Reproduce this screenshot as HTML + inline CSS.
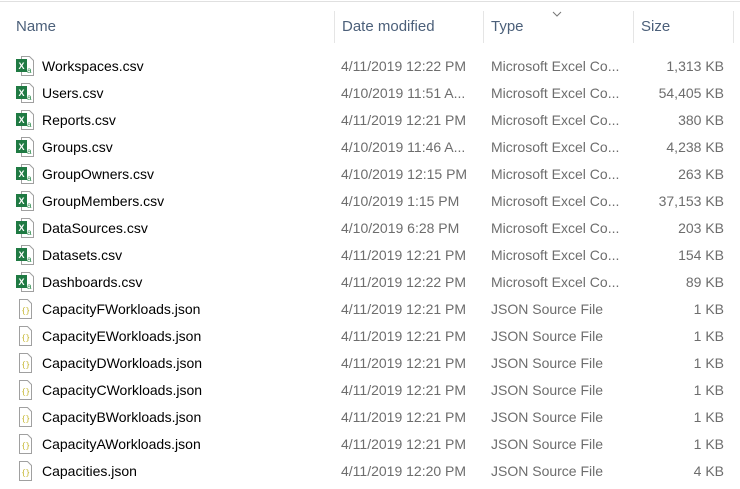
<!DOCTYPE html>
<html><head><style>
body{margin:0;width:740px;height:489px;background:#fff;font-family:"Liberation Sans",sans-serif;position:relative;overflow:hidden;color:#1a1a1a}
.top{position:absolute;left:0;top:1px;width:740px;height:1px;background:#e0e0e0}
.sep{position:absolute;top:11px;width:1px;height:32px;background:#e5e5e5}
.h{position:absolute;top:18px;font-size:15px;color:#4c607a}
.r{position:absolute;left:0;width:740px;height:27px;font-size:14px}
.r span{position:absolute;top:5px;white-space:nowrap}
.n{left:42px;color:#000}.d{left:341px;color:#6d6d6d}.t{left:491px;color:#6d6d6d}.s{right:16px;color:#6d6d6d}
.ic{position:absolute;left:16px;top:3px}
</style></head><body>
<div class="top"></div>
<div class="sep" style="left:334px"></div><div class="sep" style="left:483px"></div><div class="sep" style="left:633px"></div><div class="sep" style="left:733px"></div>
<div class="h" style="left:16px">Name</div>
<div class="h" style="left:342px">Date modified</div>
<div class="h" style="left:491px">Type</div>
<div class="h" style="left:641px">Size</div>
<svg style="position:absolute;left:552px;top:11px" width="10" height="6"><path d="M1 1 L5 5 L9 1" stroke="#777" fill="none"/></svg>
<div id="rows"></div>
<script>
var X='<svg class="ic" width="18" height="20"><path d="M5.5 .5H13.5L17.5 4.5V19.5H5.5Z" fill="#fff" stroke="#a0a0a0"/><text x="11" y="17" font-size="8" fill="#2b8a4a" font-family="Liberation Sans">a</text><rect x="0" y="3" width="11" height="13" fill="#1f7a43"/><text x="2.5" y="13" font-size="9" font-weight="bold" fill="#fff" font-family="Liberation Sans">X</text></svg>';
var J='<svg class="ic" width="18" height="20"><path d="M3.5 .5H11.5L15.5 4.5V19.5H3.5Z" fill="#fff" stroke="#a0a0a0"/><text x="5.5" y="14" font-size="7" fill="#b8a600" font-family="Liberation Mono">{}</text></svg>';
var d=[["Workspaces.csv","4/11/2019 12:22 PM","1,313 KB"],["Users.csv","4/10/2019 11:51 A...","54,405 KB"],["Reports.csv","4/11/2019 12:21 PM","380 KB"],["Groups.csv","4/10/2019 11:46 A...","4,238 KB"],["GroupOwners.csv","4/10/2019 12:15 PM","263 KB"],["GroupMembers.csv","4/10/2019 1:15 PM","37,153 KB"],["DataSources.csv","4/10/2019 6:28 PM","203 KB"],["Datasets.csv","4/11/2019 12:21 PM","154 KB"],["Dashboards.csv","4/11/2019 12:22 PM","89 KB"],["CapacityFWorkloads.json","4/11/2019 12:21 PM","1 KB"],["CapacityEWorkloads.json","4/11/2019 12:21 PM","1 KB"],["CapacityDWorkloads.json","4/11/2019 12:21 PM","1 KB"],["CapacityCWorkloads.json","4/11/2019 12:21 PM","1 KB"],["CapacityBWorkloads.json","4/11/2019 12:21 PM","1 KB"],["CapacityAWorkloads.json","4/11/2019 12:21 PM","1 KB"],["Capacities.json","4/11/2019 12:20 PM","4 KB"]];
var h='';d.forEach(function(r,i){var c=r[0].indexOf('.csv')>0;h+='<div class="r" style="top:'+(53+27*i)+'px">'+(c?X:J)+'<span class="n">'+r[0]+'</span><span class="d">'+r[1]+'</span><span class="t">'+(c?'Microsoft Excel Co...':'JSON Source File')+'</span><span class="s">'+r[2]+'</span></div>';});
document.getElementById('rows').innerHTML=h;
</script>
</body></html>
